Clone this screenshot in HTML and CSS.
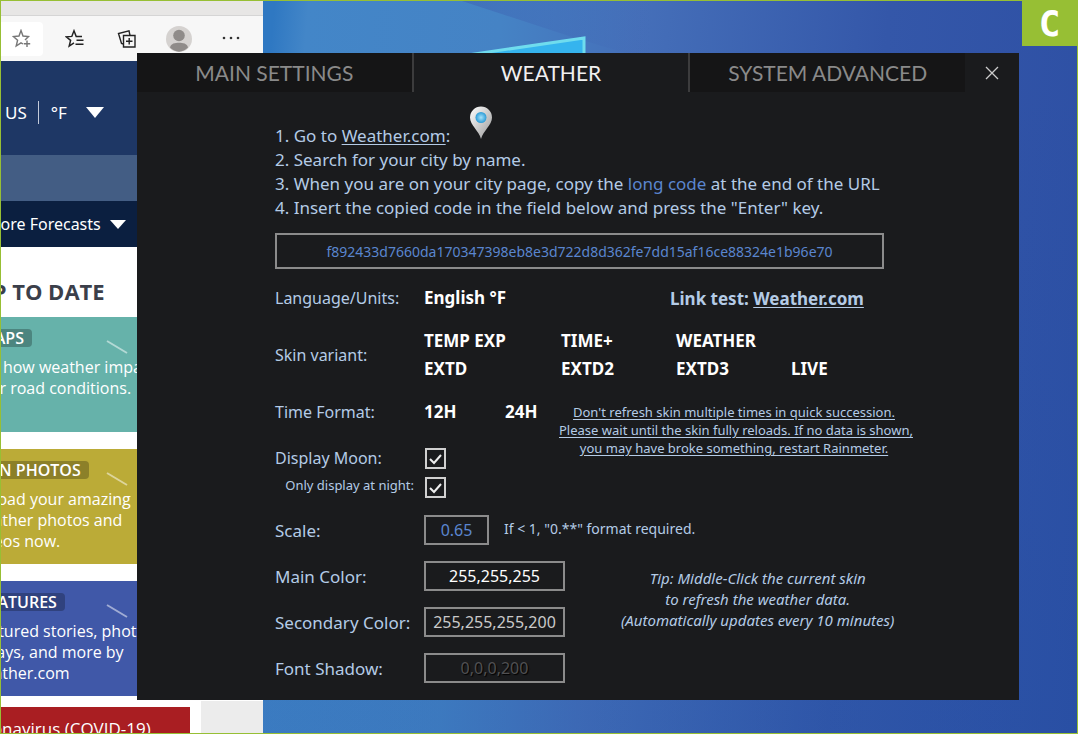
FILE: index.html
```html
<!DOCTYPE html>
<html lang="en">
<head>
    <meta charset="UTF-8">
    <meta name="viewport" content="width=device-width, initial-scale=1.0">
    <title>Weather Settings</title>
    <link rel="stylesheet" href="styles.css">
</head>
<body>
    <div class="desktop">
        <svg class="beam" viewBox="0 0 390 60" aria-hidden="true">
            <defs>
                <linearGradient id="beamShade" x1="0" y1="0" x2="1" y2="0">
                    <stop offset="0" stop-color="#3d5fb0" stop-opacity="0.5"/>
                    <stop offset="1" stop-color="#3d5fb0" stop-opacity="0"/>
                </linearGradient>
            </defs>
            <path d="M200 0 L310 36 L390 60 V0 Z" fill="url(#beamShade)"/>
            <path d="M212 54 L322 37 V60 H212 Z" fill="#35b4ee"/>
            <path d="M206 54 L322 37 V60" fill="none" stroke="#6fdcee" stroke-width="3"/>
        </svg>

        <div class="browser">
            <div class="titlebar"></div>
            <div class="toolbar">
                <button class="tool address" aria-label="Add to favorites">
                    <svg width="20" height="20" viewBox="0 0 20 20" fill="none" stroke="#777" stroke-width="1.4">
                        <path d="M13 11 L16.5 7.5 L11 7 L9 1.5 L7 7 L1.3 7.5 L5.6 11.2 L4.2 17 L9 13.8 L11 15"/>
                        <path d="M15 11.5 V18 M11.8 14.8 H18.2"/>
                    </svg>
                </button>
                <button class="tool" aria-label="Favorites">
                    <svg width="20" height="20" viewBox="0 0 20 20" fill="none" stroke="#222" stroke-width="1.5">
                        <path d="M17 7.4 H11.2 L9 1.8 L6.8 7.4 L1.2 7.8 L5.6 11.4 L4.2 17 L9 13.8"/>
                        <path d="M11.5 11.3 H18.5 M10.5 15.2 H18.5"/>
                    </svg>
                </button>
                <button class="tool" aria-label="Collections">
                    <svg width="20" height="20" viewBox="0 0 20 20" fill="none" stroke="#222" stroke-width="1.4">
                        <path d="M6.5 6.5 H18 V18 H6.5 Z M12.2 9 V15.5 M9 12.2 H15.5"/>
                        <path d="M6.5 15 L4.5 14.5 L1.5 4.5 L12 1.8 L13 6.5"/>
                    </svg>
                </button>
                <button class="tool" aria-label="Profile">
                    <svg width="26" height="26" viewBox="0 0 26 26">
                        <circle cx="13" cy="13" r="13" fill="#d5d2d0"/>
                        <circle cx="13" cy="9.5" r="5.8" fill="#8f8b89"/>
                        <path d="M4 21.5 C5 17.5 9 16.8 13 16.8 S21 17.5 22 21.5 C17 27 9 27 4 21.5 Z" fill="#8f8b89"/>
                    </svg>
                </button>
                <button class="tool" aria-label="More">
                    <svg width="20" height="20" viewBox="0 0 20 20" fill="#333">
                        <circle cx="3" cy="9" r="1.3"/><circle cx="10" cy="9" r="1.3"/><circle cx="17" cy="9" r="1.3"/>
                    </svg>
                </button>
            </div>
            <div class="site-header">
                <span class="region">US</span>
                <span class="unit">°F</span>
                <span class="caret"></span>
            </div>
            <div class="site-band"></div>
            <div class="site-nav">
                <span>More Forecasts</span>
                <span class="caret small"></span>
            </div>
            <div class="page">
                <h2>UP TO DATE</h2>
                <div class="card teal">
                    <span class="tag">MAPS</span>
                    <svg class="dash" width="22" height="16" viewBox="0 0 22 16"><path d="M1 2 L21 14"/></svg>
                    <p>See how weather impacts<br>your road conditions.</p>
                </div>
                <div class="card olive">
                    <span class="tag">FAN PHOTOS</span>
                    <svg class="dash" width="22" height="16" viewBox="0 0 22 16"><path d="M1 2 L21 14"/></svg>
                    <p>Upload your amazing<br>weather photos and<br>videos now.</p>
                </div>
                <div class="card indigo">
                    <span class="tag">FEATURES</span>
                    <svg class="dash" width="22" height="16" viewBox="0 0 22 16"><path d="M1 2 L21 14"/></svg>
                    <p>Featured stories, photo<br>essays, and more by<br>weather.com</p>
                </div>
                <div class="alert-row">
                    <div class="alert">Coronavirus (COVID-19)</div>
                    <div class="gutter"></div>
                </div>
            </div>
        </div>

        <div class="panel">
            <div class="tabs">
                <button class="tab">MAIN SETTINGS</button>
                <button class="tab active">WEATHER</button>
                <button class="tab">SYSTEM ADVANCED</button>
                <button class="close" aria-label="Close">
                    <svg width="14" height="14" viewBox="0 0 14 14" fill="none" stroke="#ccc" stroke-width="1.3"><path d="M1 1 L13 13 M13 1 L1 13"/></svg>
                </button>
            </div>

            <div class="content">
                <div class="steps">
                    <div class="step">1. Go to <a href="#">Weather.com</a>:</div>
                    <div class="step">2. Search for your city by name.</div>
                    <div class="step">3. When you are on your city page, copy the <span class="accent">long code</span> at the end of the URL</div>
                    <div class="step">4. Insert the copied code in the field below and press the "Enter" key.</div>
                    <svg class="pin" width="24" height="34" viewBox="0 0 24 34" aria-hidden="true">
                        <defs>
                            <linearGradient id="pinBody" x1="0" y1="0" x2="1" y2="1">
                                <stop offset="0" stop-color="#fff"/>
                                <stop offset="1" stop-color="#999"/>
                            </linearGradient>
                            <radialGradient id="pinEye">
                                <stop offset="0" stop-color="#a5e2fa"/>
                                <stop offset="1" stop-color="#2b9bd6"/>
                            </radialGradient>
                        </defs>
                        <path d="M12 33 C10 25 1 19 1 11.5 A11 11 0 0 1 23 11.5 C23 19 14 25 12 33 Z" fill="url(#pinBody)"/>
                        <circle cx="12" cy="11.5" r="5.5" fill="url(#pinEye)"/>
                    </svg>
                </div>

                <input class="code" type="text" aria-label="City code" value="f892433d7660da170347398eb8e3d722d8d362fe7dd15af16ce88324e1b96e70">

                <div class="row">
                    <span class="label">Language/Units:</span>
                    <button class="option language">English °F</button>
                    <span class="link-test">Link test: <a href="#">Weather.com</a></span>
                </div>

                <div class="row variants-row">
                    <span class="label">Skin variant:</span>
                    <div class="variants">
                        <button class="option">TEMP EXP</button>
                        <button class="option">TIME+</button>
                        <button class="option">WEATHER</button>
                        <span></span>
                        <button class="option">EXTD</button>
                        <button class="option">EXTD2</button>
                        <button class="option">EXTD3</button>
                        <button class="option">LIVE</button>
                    </div>
                </div>

                <div class="split">
                    <div class="time-moon">
                        <div class="row">
                            <span class="label">Time Format:</span>
                            <button class="option hours">12H</button>
                            <button class="option">24H</button>
                        </div>
                        <div class="row moon">
                            <label class="label" for="moon">Display Moon:</label>
                            <input type="checkbox" id="moon" checked>
                        </div>
                        <div class="row night">
                            <label class="label" for="night">Only display at night:</label>
                            <input type="checkbox" id="night" checked>
                        </div>
                    </div>
                    <p class="note">Don't refresh skin multiple times in quick succession.<br>Please wait until the skin fully reloads. If no data is shown,<br>you may have broke something, restart Rainmeter.</p>
                </div>

                <div class="row scale-row">
                    <label class="label" for="scale">Scale:</label>
                    <input class="scale" type="text" id="scale" value="0.65">
                    <span class="hint">If &lt; 1, "0.**" format required.</span>
                </div>

                <div class="split">
                    <div class="colors">
                        <div class="row">
                            <label class="label" for="mainColor">Main Color:</label>
                            <input class="main" type="text" id="mainColor" value="255,255,255">
                        </div>
                        <div class="row">
                            <label class="label" for="secondaryColor">Secondary Color:</label>
                            <input class="secondary" type="text" id="secondaryColor" value="255,255,255,200">
                        </div>
                        <div class="row">
                            <label class="label" for="fontShadow">Font Shadow:</label>
                            <input class="shadow" type="text" id="fontShadow" value="0,0,0,200">
                        </div>
                    </div>
                    <p class="tip">Tip: Middle-Click the current skin<br>to refresh the weather data.<br>(Automatically updates every 10 minutes)</p>
                </div>
            </div>
        </div>

        <div class="corner">C</div>
    </div>
</body>
</html>
```
FILE: styles.css
```css
* {
    box-sizing: border-box;
    margin: 0;
    padding: 0;
}

body {
    font-family: 'Noto Sans', 'Open Sans', sans-serif;
    font-size: 16px;
    color: #b4cbe6;
}

button, input {
    font: inherit;
    color: inherit;
    background: none;
    border: none;
}

button {
    cursor: pointer;
}

a {
    color: inherit;
    text-underline-offset: 2px;
}

.desktop {
    position: relative;
    min-height: 100vh;
    overflow: hidden;
    border: 1px solid #97bf34;
    background:
        linear-gradient(to bottom, transparent 10%, rgba(25, 80, 165, 0.2) 95%),
        linear-gradient(95deg, #2f78c2 24%, #4386c8 27%, #4583c5 44%, #456fb9 56%, #3457a9 78%, #2d4fa4 100%);
}

.beam {
    position: absolute;
    left: 261px;
    top: 0;
    width: 390px;
}

/* browser window behind the panel */
.browser {
    position: absolute;
    left: -41px;
    top: 0;
    bottom: 0;
    width: 303px;
    overflow: hidden;
    background: #fff;
    color: #fff;
}

.titlebar {
    height: 15px;
    background: #e7e6e5;
    border-bottom: 1px solid #d5d5d5;
}

.toolbar {
    display: flex;
    align-items: center;
    height: 45px;
    padding-left: 40px;
    background: #f7f7f7;
}

.tool {
    display: flex;
    align-items: center;
    justify-content: center;
    width: 52px;
    height: 34px;
}

.address {
    width: 43px;
    margin-right: 6px;
    background: #fff;
    border-radius: 0 4px 4px 0;
}

.site-header {
    display: flex;
    align-items: center;
    height: 94px;
    padding: 8px 0 0 45px;
    background: #1e3765;
    font-size: 17px;
}

.region {
    padding-right: 11px;
    border-right: 1px solid #c3cada;
}

.unit {
    padding-left: 12px;
}

.caret {
    margin-left: 19px;
    border: 9px solid transparent;
    border-top: 11px solid #fff;
    border-bottom: 0;
}

.caret.small {
    margin-left: 9px;
    border-width: 9px 8px 0;
}

.site-band {
    height: 46px;
    background: #435d84;
}

.site-nav {
    display: flex;
    align-items: center;
    height: 46px;
    padding-left: 26px;
    background: #0b1f40;
}

.page {
    font-family: 'Open Sans', sans-serif;
}

.page h2 {
    height: 70px;
    padding: 13px 0 0 16px;
    border-top: 16px solid #fff;
    font-size: 22px;
    font-weight: 700;
    line-height: 30px;
    color: #3b3f4a;
}

.card {
    position: relative;
    height: 115px;
    margin-bottom: 17px;
    padding: 12px 0 0 12px;
    font-weight: 500;
    line-height: 21px;
}

.tag {
    display: block;
    width: max-content;
    height: 18px;
    padding: 0 8px;
    border-radius: 4px;
    background: rgba(0, 0, 0, 0.25);
    font-weight: 600;
    line-height: 18px;
}

.card p {
    margin-top: 10px;
    white-space: nowrap;
}

.dash {
    position: absolute;
    left: 146px;
    top: 22px;
    fill: none;
    stroke: rgba(255, 255, 255, 0.5);
    stroke-width: 2;
}

.teal {
    background: #66b2aa;
}

.olive {
    background: #bbab37;
}

.indigo {
    background: #4058a8;
}

.alert-row {
    display: flex;
    justify-content: space-between;
    margin-top: -12px;
}

.alert {
    width: 230px;
    height: 60px;
    margin-top: 6px;
    padding: 10px 0 0 4px;
    background: #a91e22;
    font-size: 17px;
}

.gutter {
    width: 62px;
    background: #ececec;
}

/* settings panel */
.panel {
    position: absolute;
    left: 136px;
    right: 58px;
    top: 52px;
    background: #1a1b1d;
}

.tabs {
    display: flex;
    height: 39px;
}

.tab {
    flex: 1;
    background: #151516;
    font-family: Lato, sans-serif;
    font-size: 21px;
    color: #8a8a8a;
}

.tab.active {
    background: none;
    border-left: 2px solid #3c3c3d;
    border-right: 2px solid #3c3c3d;
    color: #f0f0f0;
}

.close {
    display: flex;
    align-items: center;
    justify-content: center;
    width: 54px;
}

.content {
    padding: 32px 100px 9px 138px;
}

.steps {
    position: relative;
    font-size: 17px;
}

.step {
    line-height: 24px;
    white-space: nowrap;
}

.pin {
    position: absolute;
    left: 194px;
    top: -18px;
}

.accent {
    color: #5a86cf;
}

.code, .scale, .colors input {
    border: 2px solid #8b8b8b;
    text-align: center;
}

.code {
    display: block;
    width: 609px;
    height: 36px;
    margin: 13px 0 6px;
    font-size: 14px;
    color: #5a86cf;
}

.row {
    display: flex;
    align-items: center;
    height: 46px;
}

.label {
    flex: none;
    width: 149px;
}

.option, .link-test {
    font-size: 17px;
    font-weight: 700;
}

.option {
    line-height: 28px;
    text-align: left;
    color: #fff;
}

.language {
    width: 246px;
}

.variants-row {
    height: 68px;
}

.variants {
    display: grid;
    grid-template-columns: 137px 115px 115px auto;
}

.split {
    display: flex;
}

.time-moon {
    width: 284px;
}

.hours {
    width: 81px;
}

.moon {
    height: 34px;
    margin-top: 6px;
}

.night {
    height: 24px;
}

.night .label {
    padding: 0 10px 4px 0;
    font-size: 13px;
    text-align: right;
}

input[type="checkbox"] {
    appearance: none;
    width: 21px;
    height: 21px;
    margin-left: 1px;
    border: 2px solid #d0d0d0;
    background: no-repeat center/17px url("data:image/svg+xml,%3Csvg xmlns='http://www.w3.org/2000/svg' viewBox='0 0 17 17'%3E%3Cpath d='M3 9l4 4 7-8' fill='none' stroke='%23eee' stroke-width='2'/%3E%3C/svg%3E");
}

.note {
    width: 350px;
    padding-top: 14px;
    font-size: 13px;
    line-height: 18px;
    text-align: center;
    text-decoration: underline;
    text-underline-offset: 2px;
    white-space: nowrap;
}

.scale-row {
    margin-top: 8px;
}

.scale-row .label, .colors .label {
    font-size: 17px;
}

.scale {
    width: 65px;
    height: 30px;
    color: #5a86cf;
}

.hint {
    padding: 0 0 4px 15px;
    font-size: 14px;
}

.colors input {
    width: 141px;
    height: 30px;
}

.colors .main {
    color: #fff;
}

.colors .secondary {
    color: #cacaca;
}

.colors .shadow {
    color: #505052;
    text-shadow: 1px 1px 1px #000;
}

.tip {
    margin-left: 56px;
    padding-top: 15px;
    font-size: 15px;
    font-style: italic;
    line-height: 21px;
    text-align: center;
    white-space: nowrap;
}

.corner {
    position: absolute;
    right: 0;
    top: 0;
    width: 55px;
    height: 45px;
    background: #97bf34;
    font-family: 'DejaVu Sans Mono', monospace;
    font-size: 36px;
    font-weight: 700;
    line-height: 45px;
    text-align: center;
    color: #fff;
}
```
